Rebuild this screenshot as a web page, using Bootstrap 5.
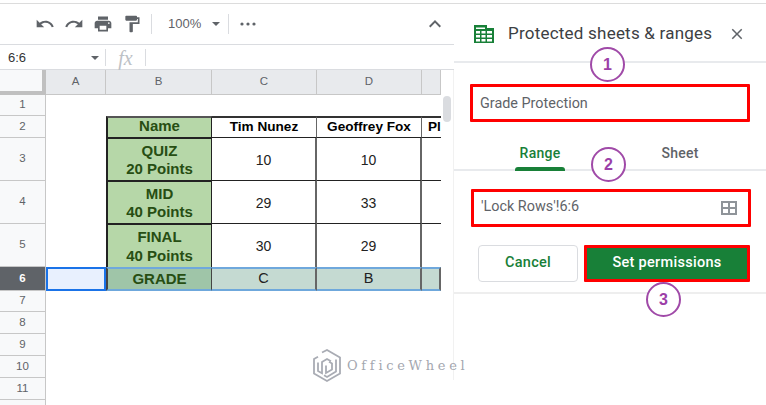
<!DOCTYPE html>
<html lang="en"><head><meta charset="utf-8"><title>Protected sheets</title>
<link rel="stylesheet" href="https://cdn.jsdelivr.net/npm/bootstrap@5.3.0/dist/css/bootstrap.min.css">
<style>
html,body{margin:0;width:766px;height:405px;overflow:hidden;background:#fff}
.app{width:766px;height:405px;position:relative;overflow:hidden;font-family:"Liberation Sans",Arial,sans-serif}
.topline{height:4px;border-bottom:1px solid #dcdcdc}
.mainrow{height:401px}
.leftcol{width:454px;flex:none}
.toolbar{height:41px;border-bottom:1px solid #dadce0;padding-left:35px;color:#5f6368}
.toolbar svg{fill:#5f6368;display:block;flex:none}
.toolicon{margin-left:9px}
.vsep{width:1px;height:20px;background:#dadce0;flex:none}
.zoomtxt{font-size:13px;color:#5f6368;width:32px;margin-left:16px}
.caret{width:0;height:0;border-left:4px solid transparent;border-right:4px solid transparent;border-top:4px solid #5f6368;flex:none}
.fxbar{height:25px;border-bottom:1px solid #dadce0;font-size:13px;color:#333;padding-top:1px}
.namebox{width:105px;padding-left:8px;padding-right:6px;flex:none}
.fxlabel{font-family:"Liberation Serif",serif;font-style:italic;font-size:20px;color:#bdc1c6;width:39px;text-align:center;line-height:1}
.shortvsep{height:17px}
.sheetwrap{height:310px}
.gridsheet{display:grid;width:441px;grid-template-columns:46px 60px 106px 105px 105px 19px;grid-template-rows:25px 21px 22px 43px 43px 43px 24px 21px 22px 22px 22px 22px 20px;border-right:1px solid #dadce0;flex:none}
.gridsheet>div{display:flex;align-items:center;justify-content:center;min-width:0;overflow:hidden;white-space:nowrap}
.corner{background:#f8f9fa;border-right:4px solid #c0c0c0;border-bottom:4px solid #c0c0c0}
.colhead{background:#e8eaed;color:#5f6368;font-size:11.5px;border-right:1px solid #c7c7c7;border-bottom:1px solid #c7c7c7}
.rowhead{background:#f8f9fa;color:#5f6368;font-size:11.5px;border-right:1px solid #c7c7c7;border-bottom:1px solid #c7c7c7}
.rowactive{background:#5f6368;color:#fff;font-weight:700}
.blankspan{grid-column:2/7}
.emptycell{background:#fff}
.labelcell{background:#b6d7a8;color:#274e13;font-weight:700;font-size:15px;line-height:18.5px;padding-top:1px;text-align:center;white-space:pre-line!important;border:1px solid #222;border-width:1px 1px 1px 2px}
.gridsheet>.namecell{border-top:2px solid #555;padding:0 0 2px}
.headcell{background:#fff;color:#000;font-weight:700;font-size:13.6px;border-top:2px solid #333;border-bottom:1px solid #222;border-right:1px solid #666}
.datacell{background:#fff;color:#222;font-size:14px;padding-top:2px;border-bottom:1px solid #222;border-right:2px solid #666}
.gridsheet>.lastrow{border-bottom:0}
.datacut{border-right:0;justify-content:flex-start!important;padding-left:6px}
.selectcell{background:#e8f0fe;border:2px solid #1a73e8}
.gradelab{background:#9fc5a8;color:#274e13;font-weight:700;font-size:15px;border-top:2px solid #6fa8dc;border-bottom:2px solid #6fa8dc;border-left:2px solid #444;border-right:1px solid #444}
.gradecell{background:#c5dad2;color:#222;font-size:14.5px;border-top:2px solid #6fa8dc;border-bottom:2px solid #6fa8dc;border-right:2px solid #666}
.scrolltrack{width:13px;flex:none;border-right:1px solid #f1f1f1;padding:26px 2px 0 2px}
.thumb{height:26px;width:8px;background:#dadce0;border-radius:4px}
.panel{width:312px;flex:none;font-family:Roboto,"Liberation Sans",sans-serif;color:#3c4043}
.panelhead{height:59px;border-bottom:2px solid #e8eaed;padding-left:19px;padding-top:2px}
.paneltitle{font-size:17px;letter-spacing:.22px;color:#3c4043;margin-left:13px;width:220px;white-space:nowrap}
.formbox{margin:0;height:38px;border:3px solid #f00;border-radius:1px;font-size:14.4px;color:#5f6368;padding:0 7px;display:flex;align-items:center;background:#fff;line-height:1;width:280px;flex:none}
.namefield{margin-left:16px;margin-top:21px;padding-top:2px}
.rangefield{margin-left:17px;margin-top:18px;justify-content:space-between;padding-right:11px;padding-bottom:1px}
.tabstrip{height:49px;border-bottom:2px solid #e8eaed;padding:0 16px}
.tabitem{width:140px;font-size:14px;font-weight:500;letter-spacing:.25px;color:#5f6368;text-align:center;padding-top:21px;height:49px;position:relative}
.tabon{color:#188038}
.tabbar{position:absolute;left:45px;bottom:0;width:50px;height:4px;background:#188038;border-radius:3px 3px 0 0}
.btnrow{margin-top:18px;padding-left:24px;height:37px;gap:6px}
.btncancel{width:100px;height:37px;border:1px solid #dadce0;border-radius:4px;background:#fff;color:#188038;font-size:14.5px;font-weight:500;letter-spacing:.3px;padding:0 0 2px}
.btnset{width:166px;height:37px;border:3px solid #f00;border-radius:1px;background:#188038;color:#fff;font-size:14.5px;font-weight:500;letter-spacing:.3px;padding:0 0 2px}
.panelrule{margin-top:10px;border-top:2px solid #eee}
.badgering{position:absolute;width:35px;height:35px;border:2.5px solid #a04aa8;border-radius:50%;color:#9c3fa8;font-family:"Liberation Sans",sans-serif;font-weight:700;font-size:16px;display:flex;align-items:center;justify-content:center;background:#fff}
.ring1{left:590px;top:47px}
.ring2{left:591px;top:147px}
.ring3{left:646px;top:282px}
.watermark{position:absolute;left:312px;top:349px;display:flex;align-items:center;color:#b2b5bc}
.wmtext{font-family:"DejaVu Serif","Liberation Serif",serif;font-size:13px;letter-spacing:3.7px;margin-left:5px;white-space:nowrap;color:#a4a7af}
</style></head><body>
<div class="app">
 <div class="topline"></div>
 <div class="d-flex mainrow">
  <div class="leftcol d-flex flex-column">
   <div class="toolbar d-flex align-items-center">
    <svg width="20" height="20" viewBox="0 0 24 24"><path d="M12.5 8c-2.65 0-5.05.99-6.9 2.6L2 7v9h9l-3.62-3.62c1.39-1.16 3.16-1.88 5.12-1.88 3.54 0 6.55 2.31 7.6 5.5l2.37-.78C21.08 11.03 17.15 8 12.5 8z"/></svg>
    <svg class="toolicon" width="20" height="20" viewBox="0 0 24 24"><path d="M18.4 10.6C16.55 8.99 14.15 8 11.5 8c-4.65 0-8.58 3.03-9.96 7.22L3.9 16c1.05-3.19 4.05-5.5 7.6-5.5 1.95 0 3.73.72 5.12 1.88L13 16h9V7l-3.6 3.6z"/></svg>
    <svg class="toolicon" width="20" height="20" viewBox="0 0 24 24"><path d="M19 8H5c-1.66 0-3 1.34-3 3v6h4v4h12v-4h4v-6c0-1.66-1.34-3-3-3zm-3 11H8v-5h8v5zm3-7c-.55 0-1-.45-1-1s.45-1 1-1 1 .45 1 1-.45 1-1 1zm-1-9H6v4h12V3z"/></svg>
    <svg class="toolicon" width="20" height="20" viewBox="0 0 24 24"><path d="M18 4V3c0-.55-.45-1-1-1H5c-.55 0-1 .45-1 1v4c0 .55.45 1 1 1h12c.55 0 1-.45 1-1V6h1v4H9v11c0 .55.45 1 1 1h2c.55 0 1-.45 1-1v-9h8V4h-3z"/></svg>
    <div class="vsep" style="margin-left:9px"></div>
    <div class="zoomtxt">100%</div>
    <div class="caret" style="margin-left:12px"></div>
    <div class="vsep" style="margin-left:8px"></div>
    <svg style="margin-left:11px" width="16" height="4" viewBox="0 0 16 4"><circle cx="2" cy="2" r="1.600"/><circle cx="8" cy="2" r="1.600"/><circle cx="14" cy="2" r="1.600"/></svg>
    <svg class="ms-auto" style="margin-right:7px" width="24" height="24" viewBox="0 0 24 24"><path d="M7.41 15.41L12 10.83l4.59 4.58L18 14l-6-6-6 6z"/></svg>
   </div>
   <div class="fxbar d-flex align-items-center">
    <div class="namebox d-flex align-items-center justify-content-between"><span>6:6</span><span class="caret"></span></div>
    <div class="vsep shortvsep"></div>
    <div class="fxlabel">fx</div>
    <div class="vsep shortvsep"></div>
   </div>
   <div class="d-flex sheetwrap">
    <div class="gridsheet">
     <div class="corner"></div><div class="colhead">A</div><div class="colhead">B</div><div class="colhead">C</div><div class="colhead">D</div><div class="colhead"></div>
     <div class="rowhead">1</div><div class="emptycell blankspan"></div>
     <div class="rowhead">2</div><div class="emptycell"></div><div class="labelcell namecell">Name</div><div class="headcell">Tim Nunez</div><div class="headcell">Geoffrey Fox</div><div class="headcell datacut">Pl</div>
     <div class="rowhead">3</div><div class="emptycell"></div><div class="labelcell">QUIZ
20 Points</div><div class="datacell">10</div><div class="datacell">10</div><div class="datacell datacut"></div>
     <div class="rowhead">4</div><div class="emptycell"></div><div class="labelcell">MID
40 Points</div><div class="datacell">29</div><div class="datacell">33</div><div class="datacell datacut"></div>
     <div class="rowhead">5</div><div class="emptycell"></div><div class="labelcell lastrow">FINAL
40 Points</div><div class="datacell lastrow">30</div><div class="datacell lastrow">29</div><div class="datacell datacut lastrow"></div>
     <div class="rowhead rowactive">6</div><div class="selectcell"></div><div class="gradelab">GRADE</div><div class="gradecell">C</div><div class="gradecell">B</div><div class="gradecell datacut"></div>
     <div class="rowhead">7</div><div class="emptycell blankspan"></div>
     <div class="rowhead">8</div><div class="emptycell blankspan"></div>
     <div class="rowhead">9</div><div class="emptycell blankspan"></div>
     <div class="rowhead">10</div><div class="emptycell blankspan"></div>
     <div class="rowhead">11</div><div class="emptycell blankspan"></div>
     <div class="rowhead"></div><div class="emptycell blankspan"></div>
    </div>
    <div class="scrolltrack"><div class="thumb"></div></div>
   </div>
  </div>
  <div class="panel d-flex flex-column">
   <div class="panelhead d-flex align-items-center">
    <svg width="22" height="20" viewBox="0 0 22 20"><path fill="#188038" d="M1 1h13v3h7v15H1z"/><path fill="#fff" d="M3 3.500h9v1.500H3zM3 7h4v2.500H3zM8.500 7h4v2.500h-4zM14 7h5v2.500h-5zM3 11h4v2.500H3zM8.500 11h4v2.500h-4zM14 11h5v2.500h-5zM3 15h4v2.500H3zM8.500 15h4v2.500h-4zM14 15h5v2.500h-5z"/></svg>
    <div class="paneltitle">Protected sheets &amp; ranges</div>
    <svg width="18" height="18" viewBox="0 0 24 24"><path fill="#5f6368" d="M19 6.410L17.590 5 12 10.590 6.410 5 5 6.410 10.590 12 5 17.590 6.410 19 12 13.410 17.590 19 19 17.590 13.410 12z"/></svg>
   </div>
   <div class="form-control formbox namefield">Grade Protection</div>
   <div class="tabstrip d-flex">
    <div class="tabitem tabon">Range<span class="tabbar"></span></div>
    <div class="tabitem">Sheet</div>
   </div>
   <div class="form-control formbox rangefield"><span>'Lock Rows'!6:6</span>
    <svg width="16" height="14" viewBox="0 0 16 14"><path fill="#8f9499" d="M0 0h16v14H0zm2 2v4h5V2zm7 0v4h5V2zM2 8v4h5V8zm7 0v4h5V8z" fill-rule="evenodd"/></svg>
   </div>
   <div class="d-flex btnrow">
    <button type="button" class="btn btncancel">Cancel</button>
    <button type="button" class="btn btnset">Set permissions</button>
   </div>
   <div class="panelrule"></div>
  </div>
 </div>
 <div class="badgering ring1">1</div>
 <div class="badgering ring2">2</div>
 <div class="badgering ring3">3</div>
 <div class="watermark">
  <svg width="30" height="34" viewBox="0 0 30 34" fill="none" stroke="#a9acb4" stroke-width="1.800"><path d="M10 3.500 15 1l13 7.500v16L15 32 2 24.500V10l4-2.300"/><path d="M6 13.500V22l4 2.300V13l5-3 4 2.300M24 10.500v12L15 28l-3-1.700"/><path d="M14 16.500V24l6-3.500v-6l-3-1.700"/></svg>
  <span class="wmtext">OfficeWheel</span>
 </div>
</div>
<script src="https://cdn.jsdelivr.net/npm/bootstrap@5.3.0/dist/js/bootstrap.bundle.min.js"></script>
</body></html>
